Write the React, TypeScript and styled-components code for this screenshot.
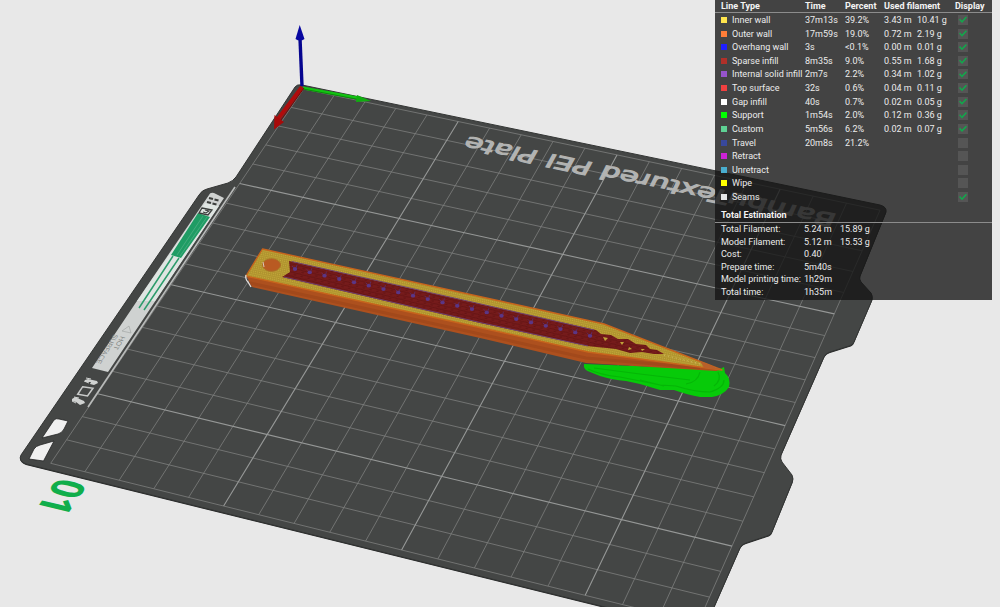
import React, { useState } from "react";
import styled, { createGlobalStyle } from "styled-components";

const GlobalStyle = createGlobalStyle`
  *, *::before, *::after { box-sizing: border-box; }
  body {
    margin: 0;
    background: #e8e8e8;
    font-family: Roboto, "Liberation Sans", sans-serif;
  }
`;

/* ---------- plate geometry: cells of 10 mm, projected to the view ---------- */

type Point = [number, number];

const CELLS = 18;
const CORNERS: Point[] = [
  [303.5, 89],
  [880, 210.2],
  [698, 623.2],
  [50.7, 463.3],
];

const projection = (() => {
  const [[x0, y0], [x1, y1], [x2, y2], [x3, y3]] = CORNERS;
  const dx1 = x1 - x2, dx2 = x3 - x2, dx3 = x0 - x1 + x2 - x3;
  const dy1 = y1 - y2, dy2 = y3 - y2, dy3 = y0 - y1 + y2 - y3;
  const det = dx1 * dy2 - dx2 * dy1;
  const g = (dx3 * dy2 - dx2 * dy3) / det;
  const h = (dx1 * dy3 - dx3 * dy1) / det;
  return {
    a: x1 - x0 + g * x1, b: x3 - x0 + h * x3, c: x0,
    d: y1 - y0 + g * y1, e: y3 - y0 + h * y3, f: y0,
    g, h,
  };
})();

const project = (u: number, v: number): Point => {
  const s = u / CELLS, t = v / CELLS;
  const p = projection;
  const w = p.g * s + p.h * t + 1;
  return [(p.a * s + p.b * t + p.c) / w, (p.d * s + p.e * t + p.f) / w];
};

const segment = (u1: number, v1: number, u2: number, v2: number) => {
  const [ax, ay] = project(u1, v1);
  const [bx, by] = project(u2, v2);
  return `M${ax.toFixed(1)} ${ay.toFixed(1)}L${bx.toFixed(1)} ${by.toFixed(1)}`;
};

/* Matrix that lays artwork measured in millimetres on the plate. */
const onPlate = (u: number, v: number) => {
  const [x, y] = project(u, v);
  const [ux, uy] = project(u + 0.1, v);
  const [vx, vy] = project(u, v + 0.1);
  const m = [x - ux, y - uy, x - vx, y - vy, x, y];
  return `matrix(${m.map((n) => n.toFixed(4)).join(" ")})`;
};

const steps = Array.from({ length: CELLS + 1 }, (_, i) => i);
const gridPath = (major: boolean) =>
  steps
    .filter((i) => (i % 5 === 0 && i > 0) === major)
    .map((i) => segment(i, 0, i, CELLS) + segment(0, i, CELLS, i))
    .join("");

const plateWords = [
  { text: "Bambu", u: 16.9, v: 0.6 },
  { text: "Textured", u: 13.7, v: 0.6 },
  { text: "PEI", u: 9.5, v: 0.6 },
  { text: "Plate", u: 7.8, v: 0.6 },
];

/* ---------- scene ---------- */

const Viewport = styled.main`
  position: relative;
  min-height: 100vh;
  overflow: hidden;
`;

const Scene = styled.svg`
  position: absolute;
  inset: 0;
  width: 100%;
  height: 100%;
`;

const PlateText = styled.text`
  font-family: "DejaVu Sans", sans-serif;
  font-size: 9px;
  fill: #b2b3b2;
  stroke: #b2b3b2;
  stroke-width: 0.5px;
`;

const WarningText = styled.text`
  font-family: "Liberation Sans", sans-serif;
  font-size: 3px;
  fill: #858987;
`;

const PlateNumber = styled.text`
  font-family: "Noto Sans", sans-serif;
  font-size: 12px;
  font-weight: 700;
  fill: #10ae4b;
`;

const PLATE =
  "M295 87Q297 84 302 85L880 205Q887 207 886 212L860 276Q859 279 861 282L871 293Q873 296 872 300L854 342Q853 345 849 346L830 352Q826 353 824 357L781 455Q780 459 782 462L792 475Q794 479 792 483L772 532Q771 535 767 536L746 543Q742 544 740 548L704 630L690 628L26 464Q18 461 21 455L199 195Q202 190 207 189L228 183Q233 181 236 177Z";

function Plate() {
  return (
    <g>
      <path d={PLATE} fill="#222323" transform="translate(0 1)" />
      <path d={PLATE} fill="#444645" stroke="#343635" strokeWidth="1" />
      <path d={gridPath(false)} stroke="#7d7f7e" strokeWidth="0.8" fill="none" />
      <path d={gridPath(true)} stroke="#959796" strokeWidth="1.1" fill="none" />
      <path d="M235 187L88 407" stroke="#b9bbba" strokeWidth="1.6" />
      {plateWords.map((w) => (
        <PlateText key={w.text} transform={onPlate(w.u, w.v)}>
          {w.text}
        </PlateText>
      ))}
    </g>
  );
}

function PlateLabels() {
  return (
    <g>
      <path d="M209 195Q210 192 214 193L224 198L108 372L92 368L145 289Z" fill="#cfd2d1" />
      <path d="M205 203L219 206L155 301L137 301Z" fill="#dfe5e2" />
      <path d="M198 213L210 217L181 258L171 255Z" fill="#1f9c64" />
      <path d="M203 216L177 255M207 217L180 256" stroke="#55b287" strokeWidth="0.7" />
      <path d="M173 256L139 308M179 258L144 310" stroke="#2d9c6c" strokeWidth="1.5" />
      <path d="M209 198L213 199M207 202L211 203M214.500 199.500L218.500 200.500M212.500 203.500L216.500 204.500" stroke="#3b3e3c" strokeWidth="2.2" />
      <path d="M202 208L212 210L208 215L199 213Z" fill="none" stroke="#3b3e3c" strokeWidth="1.3" />
      <path d="M205 210L209 211L206 213L203 212" fill="none" stroke="#3b3e3c" strokeWidth="1.1" />
      <path d="M129 326L122 331L131 333Z" fill="none" stroke="#a4a8a6" strokeWidth="0.7" />
      <WarningText transform="matrix(-1.3 2.05 -2.2 -0.6 121 336)">HOT</WarningText>
      <WarningText transform="matrix(-1.3 2.05 -2.2 -0.6 114 334)">SURFACE</WarningText>
      <path d="M82.7 386.7L93 388.3L87.5 396L77.7 394.3Z" fill="none" stroke="#c9cbca" strokeWidth="1.5" />
      <path d="M85 380L88 379L97 381L98 383L94 385L90 384L91 382L85 382ZM72 399L75 397L84 401L85 403L80 405L76 402L72 401Z" fill="#d0d2d1" />
      <path d="M86 378L91 379M84 381L89 383M74 397L79 398M72 401L76 403" stroke="#d0d2d1" strokeWidth="1" />
      <path d="M54 420Q56 418 59 419L68 421L64 429Q62 433 58 434L42 438Z" fill="#f0f0f0" stroke="#232524" strokeWidth="0.8" />
      <path d="M54 441L43.5 461L29 459L34 449Q36 446 40 445Z" fill="#f0f0f0" stroke="#232524" strokeWidth="0.8" />
      <PlateNumber transform="matrix(-1.6 2.35 -3.5 -0.85 58 477)">01</PlateNumber>
    </g>
  );
}

function Axes() {
  return (
    <g>
      <path d="M302 86L300 38" stroke="#06058f" strokeWidth="3.4" />
      <path d="M295.5 39Q300 42 304.5 39L299.7 25Z" fill="#0807a0" />
      <path d="M303 88L358 98" stroke="#12c312" strokeWidth="3" />
      <path d="M303 89L358 99.400" stroke="#0b8a0b" strokeWidth="1" />
      <path d="M357 95L356 102L371 101Z" fill="#0fae0f" />
      <path d="M302 87L278 119" stroke="#b00c0c" strokeWidth="4" />
      <path d="M304 88L281 120" stroke="#7e0606" strokeWidth="1" />
      <path d="M274.500 115L284 122L274 129.500Z" fill="#a80a0a" />
    </g>
  );
}

function Model() {
  const dots = Array.from({ length: 21 }, (_, i) => i);
  return (
    <g>
      <defs>
        <pattern id="walls" width="2" height="2" patternUnits="userSpaceOnUse" patternTransform="rotate(12)">
          <rect width="2" height="2" fill="#b0932f" />
          <rect width="1" height="1" fill="#c4ab3a" />
        </pattern>
        <pattern id="infill" width="7" height="4" patternUnits="userSpaceOnUse" patternTransform="rotate(14)">
          <rect width="7" height="4" fill="#761b1b" />
          <path d="M0 1L3 2L7 1M1 4L4 3" stroke="#651414" strokeWidth="1" fill="none" />
        </pattern>
      </defs>
      <path
        d="M584 364Q583 370 590 372L600 376Q612 380 626 381L640 384L660 390L674 390Q688 395 700 397L712 397Q724 395 729 387Q731 378 725 373L724 367L718 370L660 367Z"
        fill="#07ca09"
      />
      <path
        d="M588 369Q600 375 620 377L660 385L676 386Q694 392 710 392Q724 388 724 380M594 368L640 374L690 380M700 372Q698 382 686 384M718 372Q722 380 714 386M640 380L664 386"
        fill="none" stroke="#05b607" strokeWidth="1.2"
      />
      <path d="M246 275L252 287L480 338L586 363L716 371L722 369L588 351Z" fill="#ad501e" />
      <path d="M250 283L480 334L586 358L700 368" fill="none" stroke="#a2491b" strokeWidth="3" />
      <path
        d="M262.500 249L500 301L604 324L722 370L588 352L500 332L246 276Z"
        fill="url(#walls)" stroke="#c7641c" strokeWidth="1.4" strokeLinejoin="round"
      />
      <path d="M246 275Q245 279 248 282L251 287" fill="none" stroke="#e4dedb" strokeWidth="1.3" />
      <path
        d="M289 261L480 304L596 330L601 334L611 335L618 339L628 339L636 344L646 345L650 349L657 350L664 354L654 354L642 352L630 353L616 349L587 346L480 323L282 277L290 272Z"
        fill="url(#infill)"
      />
      <path d="M292 261.500L480 303.800L594 330M284 277L480 322.500L588 346" fill="none" stroke="#704570" strokeWidth="1" />
      <path
        d="M603 337L608 338L605 341ZM620 342L624 342L622 345ZM629 347L632 349L628 350ZM641 349L645 349L642 351Z"
        fill="#c0a43a"
      />
      {dots.map((i) => (
        <g key={i} transform={`translate(${295 + i * 14.75} ${269 + i * 3.34})`}>
          <ellipse rx="2.200" ry="1.900" fill="#5b3686" />
          <path d="M-3 -3L-1 -1M2 -4L1 -1" stroke="#593070" strokeWidth="0.8" />
        </g>
      ))}
      <ellipse cx="271.500" cy="265" rx="9" ry="6.300" fill="#b95a22" stroke="#ab6f25" strokeWidth="1" />
      <path d="M263 262L264 267" stroke="#d9c9b8" strokeWidth="1" />
      <path d="M664 355L716 368" stroke="#d7c26a" strokeWidth="1" strokeDasharray="1 3" />
      <path d="M700 361L722 370L704 368Z" fill="#b9602a" />
    </g>
  );
}

/* ---------- statistics panel ---------- */

const Panel = styled.section`
  position: absolute;
  top: 0;
  right: 8px;
  width: 277px;
  padding-bottom: 2px;
  background: rgba(20, 20, 20, 0.78);
  color: #ececec;
  font-size: 9px;
  line-height: 12px;
  white-space: nowrap;
`;

const StatsTable = styled.table<{ $height: number }>`
  width: 100%;
  height: ${(p) => p.$height}px;
  table-layout: fixed;
  border-collapse: collapse;
  text-align: left;
  th, td { padding: 0; font-weight: 400; }
  th:first-child, td:first-child { padding-left: 6px; }
`;

const Col = styled.col<{ $w?: number }>`
  width: ${(p) => (p.$w ? `${p.$w}px` : "auto")};
`;

const HeadRow = styled.tr`
  && th {
    border-bottom: 1px solid #8c8c8c;
    color: #f4f4f4;
    font-weight: 700;
  }
`;

const LineType = styled.span`
  display: flex;
  align-items: center;
  gap: 5px;
`;

const Swatch = styled.i<{ $color: string }>`
  flex: none;
  width: 6px;
  height: 6px;
  background: ${(p) => p.$color};
`;

const Tick = styled.input`
  appearance: none;
  display: grid;
  place-items: center;
  width: 10px;
  height: 10px;
  margin: 0 0 0 3px;
  background: #555;
  &:checked::after {
    content: "";
    width: 8px;
    height: 7px;
    background: #12a84c;
    clip-path: polygon(0 50%, 14% 34%, 36% 64%, 86% 4%, 100% 18%, 38% 96%);
  }
`;

const SectionTitle = styled.h2`
  margin: 0;
  padding: 5px 6px 1px;
  border-bottom: 1px solid #8c8c8c;
  color: #f4f4f4;
  font-size: 9px;
  font-weight: 700;
  line-height: 12px;
`;

interface Line {
  name: string;
  color: string;
  time?: string;
  percent?: string;
  length?: string;
  weight?: string;
  shown: boolean;
}

const lines: Line[] = [
  { name: "Inner wall", color: "#ffe54d", time: "37m13s", percent: "39.2%", length: "3.43 m", weight: "10.41 g", shown: true },
  { name: "Outer wall", color: "#ff7d38", time: "17m59s", percent: "19.0%", length: "0.72 m", weight: "2.19 g", shown: true },
  { name: "Overhang wall", color: "#1f1fff", time: "3s", percent: "<0.1%", length: "0.00 m", weight: "0.01 g", shown: true },
  { name: "Sparse infill", color: "#b03029", time: "8m35s", percent: "9.0%", length: "0.55 m", weight: "1.68 g", shown: true },
  { name: "Internal solid infill", color: "#9654cc", time: "2m7s", percent: "2.2%", length: "0.34 m", weight: "1.02 g", shown: true },
  { name: "Top surface", color: "#f04040", time: "32s", percent: "0.6%", length: "0.04 m", weight: "0.11 g", shown: true },
  { name: "Gap infill", color: "#ffffff", time: "40s", percent: "0.7%", length: "0.02 m", weight: "0.05 g", shown: true },
  { name: "Support", color: "#00ff00", time: "1m54s", percent: "2.0%", length: "0.12 m", weight: "0.36 g", shown: true },
  { name: "Custom", color: "#5ed194", time: "5m56s", percent: "6.2%", length: "0.02 m", weight: "0.07 g", shown: true },
  { name: "Travel", color: "#38489b", time: "20m8s", percent: "21.2%", shown: false },
  { name: "Retract", color: "#cd22d6", shown: false },
  { name: "Unretract", color: "#49adcf", shown: false },
  { name: "Wipe", color: "#ffff00", shown: false },
  { name: "Seams", color: "#e6e6e6", shown: true },
];

const totals: [string, string, string?][] = [
  ["Total Filament:", "5.24 m", "15.89 g"],
  ["Model Filament:", "5.12 m", "15.53 g"],
  ["Cost:", "0.40"],
  ["Prepare time:", "5m40s"],
  ["Model printing time:", "1h29m"],
  ["Total time:", "1h35m"],
];

function LineRow({ line }: { line: Line }) {
  const [shown, setShown] = useState(line.shown);
  return (
    <tr>
      <td>
        <LineType>
          <Swatch $color={line.color} />
          {line.name}
        </LineType>
      </td>
      <td>{line.time}</td>
      <td>{line.percent}</td>
      <td>{line.length}</td>
      <td>{line.weight}</td>
      <td>
        <Tick
          type="checkbox"
          aria-label={`Display ${line.name}`}
          checked={shown}
          onChange={(e) => setShown(e.target.checked)}
        />
      </td>
    </tr>
  );
}

export default function App() {
  return (
    <>
      <GlobalStyle />
      <Viewport>
        <Scene viewBox="0 0 1000 607" preserveAspectRatio="xMidYMin slice">
          <Plate />
          <PlateLabels />
          <Axes />
          <Model />
        </Scene>
        <Panel>
          <StatsTable $height={204}>
            <colgroup>
              <Col $w={90} />
              <Col $w={40} />
              <Col $w={39} />
              <Col $w={33} />
              <Col $w={38} />
              <Col />
            </colgroup>
            <thead>
              <HeadRow>
                <th>Line Type</th>
                <th>Time</th>
                <th>Percent</th>
                <th colSpan={2}>Used filament</th>
                <th>Display</th>
              </HeadRow>
            </thead>
            <tbody>
              {lines.map((line) => (
                <LineRow key={line.name} line={line} />
              ))}
            </tbody>
          </StatsTable>
          <SectionTitle>Total Estimation</SectionTitle>
          <StatsTable $height={75}>
            <colgroup>
              <Col $w={89} />
              <Col $w={36} />
              <Col />
            </colgroup>
            <tbody>
              {totals.map(([name, value, weight]) => (
                <tr key={name}>
                  <th scope="row">{name}</th>
                  <td>{value}</td>
                  <td>{weight}</td>
                </tr>
              ))}
            </tbody>
          </StatsTable>
        </Panel>
      </Viewport>
    </>
  );
}
